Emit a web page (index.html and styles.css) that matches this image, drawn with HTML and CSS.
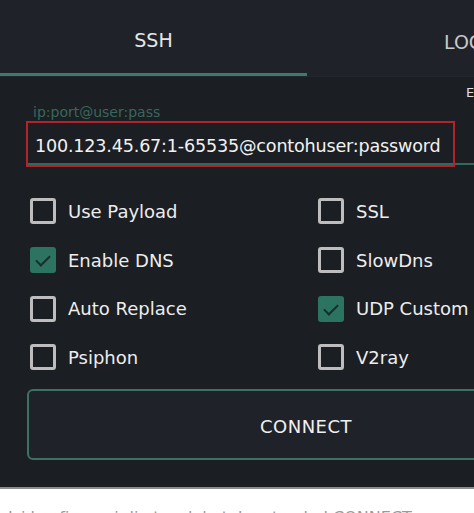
FILE: index.html
```html
<!DOCTYPE html>
<html lang="en">
  <head>
    <meta charset="utf-8" />
    <title>SSH</title>
    <meta name="viewport" content="width=device-width, initial-scale=1" />
    <link rel="stylesheet" href="styles.css">
  </head>
  <body>
    <div class="app">
      <nav class="tabs">
        <div class="tab active">SSH</div>
        <div class="tab">LOG</div>
      </nav>

      <main class="panel">
        <div class="edit-row">Edit</div>
        <label class="hint" for="server">ip:port@user:pass</label>
        <div class="field">
          <div class="field-value" id="server">100.123.45.67:1-65535@contohuser:password</div>
        </div>

        <div class="options">
          <div class="option"><span class="box"></span>Use Payload</div>
          <div class="option"><span class="box"></span>SSL</div>
          <div class="option"><span class="box checked"></span>Enable DNS</div>
          <div class="option"><span class="box"></span>SlowDns</div>
          <div class="option"><span class="box"></span>Auto Replace</div>
          <div class="option"><span class="box checked"></span>UDP Custom</div>
          <div class="option"><span class="box"></span>Psiphon</div>
          <div class="option"><span class="box"></span>V2ray</div>
        </div>

        <button class="connect">CONNECT</button>
      </main>
    </div>
    <p class="caption">Isi konfigurasi di atas, lalu tekan tombol CONNECT</p>
  </body>
</html>
```

FILE: styles.css
```css
body {
  margin: 0;
  width: 474px;
  height: 513px;
  overflow: hidden;
  background: #fff;
  font-family: 'DejaVu Sans', sans-serif;
}
.app {
  background: #1b1e23;
  height: 487px;
  border-bottom: 2px solid #8a8c90;
  overflow: hidden;
}
.tabs {
  display: flex;
  height: 77px;
  background: #1f2329;
  border-bottom: 1px solid #23272d;
  box-sizing: border-box;
}
.tab {
  flex: 0 0 307px;
  display: flex;
  align-items: center;
  justify-content: center;
  padding-top: 7px;
  box-sizing: border-box;
  color: #e6e6e6;
  font-size: 19px;
  white-space: nowrap;
}
.tab + .tab {
  justify-content: flex-start;
  padding-left: 137px;
  flex-basis: 167px;
  overflow: hidden;
  color: #c9c9c9;
}
.tab.active {
  border-bottom: 3px solid #3d7a6d;
}
.panel {
  padding: 8px 0 0 26px;
}
.edit-row {
  padding-left: 440px;
  height: 16px;
  font-size: 13px;
  color: #e0e0e0;
  white-space: nowrap;
  overflow: hidden;
}
.hint {
  display: block;
  margin: 3px 0 0 7px;
  height: 17px;
  font-size: 14px;
  color: #37685b;
}
.field {
  border-bottom: 2px solid #2f6a5d;
  margin-right: -2px;
  height: 42px;
}
.field-value {
  width: 418px;
  height: 38px;
  border: 2px solid #b3242a;
  padding: 4px 0 0 7px;
  box-sizing: content-box;
  display: flex;
  align-items: center;
  color: #f2f2f2;
  font-size: 17.6px;
  letter-spacing: -0.2px;
  white-space: nowrap;
  overflow: hidden;
}
.options {
  display: grid;
  grid-template-columns: 288px 1fr;
  grid-auto-rows: 48.7px;
  margin: 22px 0 0 4px;
}
.option {
  display: flex;
  align-items: center;
  gap: 12px;
  color: #ededed;
  font-size: 18px;
  white-space: nowrap;
}
.box {
  width: 26px;
  height: 26px;
  border: 3px solid #bdbdbd;
  border-radius: 3px;
  box-sizing: border-box;
  flex: none;
  position: relative;
}
.box.checked {
  background: #2d7362;
  border-color: #2d7362;
}
.box.checked::after {
  content: '';
  position: absolute;
  left: 6px;
  top: 2px;
  width: 6px;
  height: 12px;
  border: solid #17302b;
  border-width: 0 2.5px 2.5px 0;
  transform: rotate(45deg);
}
.connect {
  display: block;
  margin: 7px 0 0 1px;
  width: 558px;
  height: 71px;
  padding-top: 5px;
  background: #1f2329;
  border: 2px solid #3c7164;
  border-radius: 6px;
  color: #f0f0f0;
  font-family: inherit;
  font-size: 18px;
  letter-spacing: 0.5px;
}
.caption {
  margin: 19px 0 0 8px;
  color: #9a9a9a;
  font-size: 16px;
  white-space: nowrap;
}
```
